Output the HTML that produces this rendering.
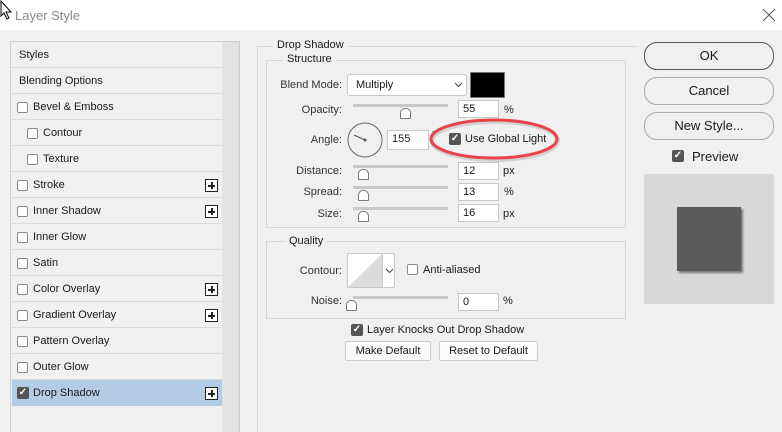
<!DOCTYPE html>
<html><head><meta charset="utf-8"><style>
*{box-sizing:border-box;margin:0;padding:0}
html,body{width:782px;height:432px;overflow:hidden}
body{background:#f0f0f0;font-family:"Liberation Sans",sans-serif;font-size:11px;color:#1a1a1a;position:relative}
.a{position:absolute}
.title{left:0;top:0;width:782px;height:30px;background:#fff}
.row{left:12px;width:210px;height:26px;border-bottom:1px solid #d9d9d9;line-height:27px}
.cb{position:absolute;width:11px;height:11px;border:1px solid #8a8a8a;border-radius:2px;background:#fff}
.cbk{position:absolute;width:12px;height:12px;border-radius:2px;background:#555;color:#fff;font-size:10px;line-height:12px;text-align:center;font-weight:bold}
.plus{position:absolute;left:193px;top:7px;width:13px;height:13px;border:1px solid #222;background:#fff}
.plus:before{content:"";position:absolute;left:2px;top:5px;width:7px;height:1.5px;background:#222}
.plus:after{content:"";position:absolute;left:5px;top:2px;width:1.5px;height:7px;background:#222}
.fs{border:1px solid #d5d5d5}
.lg{background:#f0f0f0;padding:0 4px;font-size:11px}
.lbl{text-align:right;color:#333;width:80px}
.in{background:#fff;border:1px solid #c8c8c8;height:18px;padding-left:4px;line-height:16px}
.sl{height:3px;background:#c9c9c9}
.th{width:11px;height:11px;background:#fff;border:1px solid #777;border-radius:5px 5px 1px 1px}
.btn{border:1px solid #999;border-radius:13px;background:#f0f0f0;text-align:center;font-size:13px;line-height:25px}
.pb{border:1px solid #ccc;background:#fbfbfb;text-align:center;line-height:18px;border-radius:2px}
</style></head><body>
<div class="a title"></div>
<div class="a" style="left:15px;top:8px;font-size:13px;color:#888">Layer Style</div>
<svg class="a" style="left:0;top:0" width="16" height="22"><path d="M1 1 L1 16 L4 13 L7 19 L9 18 L6 12 L11 12 Z" fill="#fff" stroke="#000" stroke-width="1"/></svg>
<svg class="a" style="left:762px;top:8px" width="14" height="14"><path d="M1 1L13 13M13 1L1 13" stroke="#555" stroke-width="1"/></svg>

<div class="a" style="left:10px;top:41px;width:230px;height:395px;border:1px solid #cfcfcf"></div>
<div class="a" style="left:222px;top:42px;width:17px;height:392px;background:#e3e3e3"></div>
<div class="a row" style="top:42px;padding-left:7px">Styles</div>
<div class="a row" style="top:68px;padding-left:7px">Blending Options</div>
<div class="a row" style="top:94px"><span class="cb" style="left:5px;top:8px"></span><span style="margin-left:21px">Bevel &amp; Emboss</span></div>
<div class="a row" style="top:120px"><span class="cb" style="left:15px;top:8px"></span><span style="margin-left:31px">Contour</span></div>
<div class="a row" style="top:146px"><span class="cb" style="left:15px;top:8px"></span><span style="margin-left:31px">Texture</span></div>
<div class="a row" style="top:172px"><span class="cb" style="left:5px;top:8px"></span><span style="margin-left:21px">Stroke</span><span class="plus"></span></div>
<div class="a row" style="top:198px"><span class="cb" style="left:5px;top:8px"></span><span style="margin-left:21px">Inner Shadow</span><span class="plus"></span></div>
<div class="a row" style="top:224px"><span class="cb" style="left:5px;top:8px"></span><span style="margin-left:21px">Inner Glow</span></div>
<div class="a row" style="top:250px"><span class="cb" style="left:5px;top:8px"></span><span style="margin-left:21px">Satin</span></div>
<div class="a row" style="top:276px"><span class="cb" style="left:5px;top:8px"></span><span style="margin-left:21px">Color Overlay</span><span class="plus"></span></div>
<div class="a row" style="top:302px"><span class="cb" style="left:5px;top:8px"></span><span style="margin-left:21px">Gradient Overlay</span><span class="plus"></span></div>
<div class="a row" style="top:328px"><span class="cb" style="left:5px;top:8px"></span><span style="margin-left:21px">Pattern Overlay</span></div>
<div class="a row" style="top:354px"><span class="cb" style="left:5px;top:8px"></span><span style="margin-left:21px">Outer Glow</span></div>
<div class="a row" style="top:380px;background:#b4cbe6;border:none"><span class="cbk" style="left:5px;top:7px">✓</span><span style="margin-left:21px">Drop Shadow</span><span class="plus"></span></div>

<div class="a" style="left:257px;top:46px;width:380px;height:390px;border-left:1px solid #d5d5d5;border-top:1px solid #d5d5d5"></div>
<div class="a lg" style="left:273px;top:39px">Drop Shadow</div>
<div class="a fs" style="left:266px;top:60px;width:360px;height:168px"></div>
<div class="a lg" style="left:283px;top:53px">Structure</div>

<div class="a lbl" style="left:262px;top:79px">Blend Mode:</div>
<div class="a in" style="left:347px;top:74px;width:120px;height:22px;border-radius:3px;line-height:20px;padding-left:8px">Multiply</div>
<svg class="a" style="left:454px;top:82px" width="9" height="6"><path d="M1 1L4.5 4.5L8 1" stroke="#444" fill="none"/></svg>
<div class="a" style="left:470px;top:72px;width:35px;height:26px;background:#000;border:1px solid #777"></div>

<div class="a lbl" style="left:262px;top:104px">Opacity:</div>
<div class="a sl" style="left:353px;top:104px;width:95px"></div>
<div class="a th" style="left:400px;top:108px"></div>
<div class="a in" style="left:458px;top:100px;width:41px">55</div>
<div class="a" style="left:504px;top:104px">%</div>

<div class="a lbl" style="left:262px;top:134px">Angle:</div>
<svg class="a" style="left:346px;top:121px" width="38" height="38"><circle cx="19" cy="19" r="17" fill="none" stroke="#666"/><path d="M19 19L8 14" stroke="#555" stroke-width="1.2"/><circle cx="19" cy="19" r="1.5" fill="#555"/></svg>
<div class="a in" style="left:387px;top:130px;width:42px;height:20px">155</div>
<div class="a" style="left:432px;top:130px;font-size:8px">°</div>
<div class="a cbk" style="left:449px;top:133px">✓</div>
<div class="a" style="left:465px;top:133px">Use Global Light</div>
<svg class="a" style="left:426px;top:116px" width="138" height="50"><ellipse cx="69" cy="25" rx="63" ry="19" fill="none" stroke="rgba(0,0,0,.12)" stroke-width="4"/><ellipse cx="68" cy="23" rx="63" ry="19" fill="none" stroke="#e84449" stroke-width="3"/></svg>

<div class="a lbl" style="left:262px;top:165px">Distance:</div>
<div class="a sl" style="left:353px;top:165px;width:95px"></div>
<div class="a th" style="left:358px;top:169px"></div>
<div class="a in" style="left:458px;top:162px;width:41px">12</div>
<div class="a" style="left:503px;top:165px">px</div>

<div class="a lbl" style="left:262px;top:186px">Spread:</div>
<div class="a sl" style="left:353px;top:186px;width:95px"></div>
<div class="a th" style="left:358px;top:190px"></div>
<div class="a in" style="left:458px;top:183px;width:41px">13</div>
<div class="a" style="left:504px;top:186px">%</div>

<div class="a lbl" style="left:262px;top:208px">Size:</div>
<div class="a sl" style="left:353px;top:207px;width:95px"></div>
<div class="a th" style="left:358px;top:211px"></div>
<div class="a in" style="left:458px;top:204px;width:41px">16</div>
<div class="a" style="left:503px;top:208px">px</div>

<div class="a fs" style="left:266px;top:241px;width:360px;height:78px"></div>
<div class="a lg" style="left:285px;top:235px">Quality</div>
<div class="a lbl" style="left:262px;top:265px">Contour:</div>
<div class="a" style="left:347px;top:253px;width:48px;height:35px;background:#fff;border:1px solid #c8c8c8;border-radius:2px"></div>
<svg class="a" style="left:348px;top:254px" width="34" height="33"><path d="M0 33L34 0L34 33Z" fill="#dcdcdc"/></svg>
<div class="a" style="left:382px;top:254px;width:1px;height:33px;background:#c8c8c8"></div>
<svg class="a" style="left:385px;top:268px" width="9" height="6"><path d="M1 1L4.5 4.5L8 1" stroke="#444" fill="none"/></svg>
<div class="a cb" style="left:407px;top:264px"></div>
<div class="a" style="left:423px;top:264px">Anti-aliased</div>
<div class="a lbl" style="left:262px;top:295px">Noise:</div>
<div class="a sl" style="left:353px;top:296px;width:95px"></div>
<div class="a th" style="left:346px;top:300px"></div>
<div class="a in" style="left:458px;top:293px;width:41px">0</div>
<div class="a" style="left:503px;top:295px">%</div>

<div class="a cbk" style="left:351px;top:324px">✓</div>
<div class="a" style="left:367px;top:324px">Layer Knocks Out Drop Shadow</div>
<div class="a pb" style="left:345px;top:341px;width:86px;height:20px">Make Default</div>
<div class="a pb" style="left:439px;top:341px;width:99px;height:20px">Reset to Default</div>

<div class="a btn" style="left:644px;top:42px;width:130px;height:28px;border-color:#555">OK</div>
<div class="a btn" style="left:644px;top:77px;width:130px;height:28px;border-color:#aaa">Cancel</div>
<div class="a btn" style="left:644px;top:112px;width:130px;height:28px;border-color:#aaa">New Style...</div>
<div class="a cbk" style="left:672px;top:150px">✓</div>
<div class="a" style="left:692px;top:149px;font-size:13px">Preview</div>
<div class="a" style="left:644px;top:174px;width:130px;height:130px;background:#d7d8d8"></div>
<div class="a" style="left:677px;top:207px;width:64px;height:64px;background:#5a5a5a;box-shadow:2px 2px 2px rgba(0,0,0,.45)"></div>
</body></html>
